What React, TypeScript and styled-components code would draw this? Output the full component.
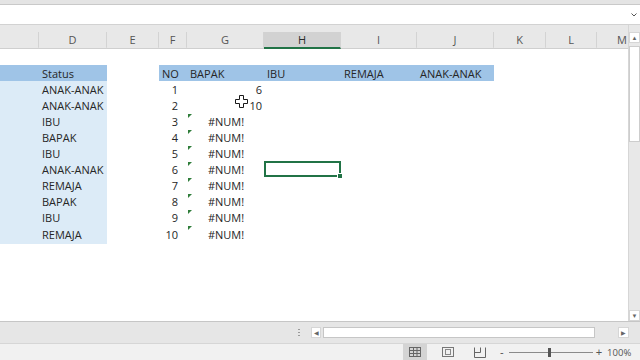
import React from 'react';
import styled, { createGlobalStyle } from 'styled-components';

const GlobalStyle = createGlobalStyle`
  html, body {
    margin: 0;
    padding: 0;
    background: #ffffff;
  }
  body {
    font-family: "Open Sans", "Liberation Sans", sans-serif;
    overflow: hidden;
  }
`;

const COLS = [39, 68, 52, 28, 77, 77, 76, 77, 52, 51, 32];
const TEMPLATE = COLS.map((w) => `${w}px`).join(' ');
const SHEET_GREEN = '#217346';

const Frame = styled.div`
  width: 640px;
  height: 360px;
  display: flex;
  flex-direction: column;
  background: #ffffff;
  overflow: hidden;
`;

const TopStrip = styled.div`
  height: 4px;
  background: #e4e4e4;
  border-bottom: 1px solid #c9c9c9;
`;

const FormulaBar = styled.div`
  height: 19px;
  background: #ffffff;
  border-bottom: 1px solid #d2d2d2;
  display: flex;
  align-items: center;
  justify-content: flex-end;
  padding-right: 3px;
`;

const Main = styled.div`
  height: 296px;
  display: flex;
`;

const SheetPane = styled.div`
  width: 629px;
  display: flex;
  flex-direction: column;
  border-right: 1px solid #d6d6d6;
  box-sizing: border-box;
`;

const HeaderBand = styled.div`
  height: 24px;
  box-sizing: border-box;
  padding-top: 7px;
  background: #e8e8e8;
  border-bottom: 1px solid #cfcfcf;
  display: grid;
  grid-template-columns: ${TEMPLATE};
`;

const ColHead = styled.div<{ $active?: boolean }>`
  display: flex;
  align-items: center;
  justify-content: center;
  font-size: 11px;
  color: ${(p) => (p.$active ? '#2a2a2a' : '#555555')};
  background: ${(p) => (p.$active ? '#d2d2d2' : 'transparent')};
  border-right: 1px solid #d3d3d3;
  border-bottom: 2px solid ${(p) => (p.$active ? SHEET_GREEN : 'transparent')};
  box-sizing: border-box;
  &:last-child {
    border-right: none;
    justify-content: flex-end;
    padding-right: 2px;
  }
`;

const Cells = styled.div`
  flex: 1;
  background: #ffffff;
`;

const Row = styled.div`
  display: grid;
  grid-template-columns: ${TEMPLATE};
  height: 16px;
`;

const LastRow = styled(Row)`
  height: 19px;
`;

type Fill = 'head' | 'band' | 'none';

const Cell = styled.div<{
  $fill?: Fill;
  $align?: 'left' | 'right' | 'center';
  $padR?: number;
  $flag?: boolean;
  $selected?: boolean;
}>`
  position: relative;
  display: flex;
  align-items: center;
  justify-content: ${(p) =>
    p.$align === 'right' ? 'flex-end' : p.$align === 'center' ? 'center' : 'flex-start'};
  padding: 0 ${(p) => p.$padR ?? 2}px 0 3px;
  font-size: 11px;
  color: #262626;
  white-space: nowrap;
  background: ${(p) =>
    p.$fill === 'head' ? '#9fc4e7' : p.$fill === 'band' ? '#dcebf7' : 'transparent'};
  box-sizing: border-box;
  ${(p) =>
    p.$flag &&
    `
    &::before {
      content: '';
      position: absolute;
      left: 1px;
      top: 1px;
      border-top: 4px solid #2f7d3a;
      border-right: 4px solid transparent;
    }
  `}
  ${(p) =>
    p.$selected &&
    `
    box-shadow: inset 0 0 0 2px ${SHEET_GREEN};
    &::after {
      content: '';
      position: absolute;
      right: -2px;
      bottom: -2px;
      width: 4px;
      height: 4px;
      background: ${SHEET_GREEN};
      border: 1px solid #ffffff;
    }
  `}
`;

const Cursor = styled.svg`
  position: absolute;
  left: 48px;
  top: -2px;
  width: 13px;
  height: 13px;
`;

const VScroll = styled.div`
  width: 11px;
  display: flex;
  flex-direction: column;
  padding-top: 7px;
  background: #e8e8e8;
`;

const ArrowBox = styled.div<{ $w?: number }>`
  width: ${(p) => p.$w ?? 11}px;
  height: 11px;
  box-sizing: border-box;
  display: flex;
  align-items: center;
  justify-content: center;
  background: #ffffff;
  border: 1px solid #d6d6d6;
  font-size: 6px;
  color: #666666;
`;

const VThumb = styled.div`
  margin-top: 3px;
  height: 96px;
  background: #ffffff;
  border: 1px solid #cdcdcd;
  box-sizing: border-box;
`;

const Spacer = styled.div`
  flex: 1;
`;

const HScrollBand = styled.div`
  height: 21px;
  border-top: 1px solid #c6c6c6;
  background: #e6e6e6;
  display: flex;
  align-items: center;
`;

const Splitter = styled.div`
  margin-left: 298px;
  width: 2px;
  height: 10px;
  background-image: radial-gradient(circle, #9a9a9a 0.8px, transparent 1px);
  background-size: 2px 3px;
`;

const HTrack = styled.div`
  margin-left: 11px;
  display: flex;
  align-items: center;
  width: 318px;
`;

const HThumb = styled.div`
  margin-left: 2px;
  width: 272px;
  height: 11px;
  background: #ffffff;
  border: 1px solid #c6c6c6;
  box-sizing: border-box;
`;

const StatusBar = styled.div`
  height: 17px;
  box-sizing: border-box;
  border-top: 1px solid #d6d6d6;
  background: #f1f1f1;
  display: flex;
  align-items: center;
`;

const ViewBtn = styled.div<{ $active?: boolean; $ml: number }>`
  margin-left: ${(p) => p.$ml}px;
  width: 24px;
  height: 16px;
  display: flex;
  align-items: center;
  justify-content: center;
  background: ${(p) => (p.$active ? '#d4d4d4' : 'transparent')};
`;

const ZoomSign = styled.span<{ $ml: number }>`
  margin-left: ${(p) => p.$ml}px;
  font-size: 11px;
  line-height: 11px;
  color: #555555;
  font-family: "Liberation Sans", sans-serif;
`;

const Slider = styled.div`
  position: relative;
  margin-left: 5px;
  width: 84px;
  height: 1px;
  background: #8a8a8a;
`;

const SliderKnob = styled.div`
  position: absolute;
  left: 39px;
  top: -4px;
  width: 3px;
  height: 9px;
  background: #555555;
`;

const ZoomText = styled.span`
  margin-left: 5px;
  font-size: 9.5px;
  color: #555555;
`;

type DataRow = { status: string; no: number; g: string; err?: boolean };

const DATA: DataRow[] = [
  { status: 'ANAK-ANAK', no: 1, g: '6' },
  { status: 'ANAK-ANAK', no: 2, g: '10' },
  { status: 'IBU', no: 3, g: '#NUM!', err: true },
  { status: 'BAPAK', no: 4, g: '#NUM!', err: true },
  { status: 'IBU', no: 5, g: '#NUM!', err: true },
  { status: 'ANAK-ANAK', no: 6, g: '#NUM!', err: true },
  { status: 'REMAJA', no: 7, g: '#NUM!', err: true },
  { status: 'BAPAK', no: 8, g: '#NUM!', err: true },
  { status: 'IBU', no: 9, g: '#NUM!', err: true },
  { status: 'REMAJA', no: 10, g: '#NUM!', err: true },
];

const LETTERS = ['', 'D', 'E', 'F', 'G', 'H', 'I', 'J', 'K', 'L', 'M'];

const PlusCursor = () => (
  <Cursor viewBox="0 0 13 13">
    <path
      d="M4.5 0.5 H8.5 V4.5 H12.5 V8.5 H8.5 V12.5 H4.5 V8.5 H0.5 V4.5 H4.5 Z"
      fill="#ffffff"
      stroke="#1a1a1a"
      strokeWidth="1"
    />
  </Cursor>
);

const NormalIcon = () => (
  <svg width="12" height="10" viewBox="0 0 12 10">
    <rect x="0.5" y="0.5" width="11" height="9" fill="none" stroke="#666" />
    <path d="M4.5 0.5 V9.5 M8 0.5 V9.5 M0.5 3.5 H11.5 M0.5 6.5 H11.5" stroke="#666" />
  </svg>
);

const PageIcon = () => (
  <svg width="12" height="10" viewBox="0 0 12 10">
    <rect x="0.5" y="0.5" width="11" height="9" fill="none" stroke="#777" />
    <rect x="3.5" y="2.5" width="5" height="5" fill="none" stroke="#888" />
  </svg>
);

const BreakIcon = () => (
  <svg width="12" height="11" viewBox="0 0 12 11">
    <path d="M0.5 0.5 V10.5 H11.5 V0.5 M0.5 5.5 H6.5 V0.5" fill="none" stroke="#666" />
  </svg>
);

const App: React.FC = () => {
  return (
    <Frame>
      <GlobalStyle />
      <TopStrip />
      <FormulaBar>
        <svg width="6" height="4" viewBox="0 0 6 4">
          <path d="M0.5 0.5 L3 3 L5.5 0.5" fill="none" stroke="#555" />
        </svg>
      </FormulaBar>

      <Main>
        <SheetPane>
          <HeaderBand>
            {LETTERS.map((l, i) => (
              <ColHead key={i} $active={l === 'H'}>
                {l}
              </ColHead>
            ))}
          </HeaderBand>

          <Cells>
            <Row />
            {/* header row of both tables */}
            <Row>
              <Cell $fill="head" />
              <Cell $fill="head">Status</Cell>
              <Cell />
              <Cell $fill="head">NO</Cell>
              <Cell $fill="head">BAPAK</Cell>
              <Cell $fill="head">IBU</Cell>
              <Cell $fill="head">REMAJA</Cell>
              <Cell $fill="head">ANAK-ANAK</Cell>
            </Row>
            {DATA.map((r, i) => {
              const RowEl = i === DATA.length - 1 ? LastRow : Row;
              return (
                <RowEl key={r.no}>
                  <Cell $fill="band" />
                  <Cell $fill="band">{r.status}</Cell>
                  <Cell />
                  <Cell $align="right" $padR={9}>
                    {r.no}
                  </Cell>
                  <Cell $align={r.err ? 'center' : 'right'} $flag={r.err}>
                    {r.no === 2 && <PlusCursor />}
                    {r.g}
                  </Cell>
                  <Cell $selected={i === 5} />
                </RowEl>
              );
            })}
          </Cells>
        </SheetPane>

        <VScroll>
          <ArrowBox>▲</ArrowBox>
          <VThumb />
          <Spacer />
          <ArrowBox>▼</ArrowBox>
        </VScroll>
      </Main>

      <HScrollBand>
        <Splitter />
        <HTrack>
          <ArrowBox $w={10}>◀</ArrowBox>
          <HThumb />
          <Spacer />
          <ArrowBox $w={11}>▶</ArrowBox>
        </HTrack>
      </HScrollBand>

      <StatusBar>
        <ViewBtn $active $ml={403}>
          <NormalIcon />
        </ViewBtn>
        <ViewBtn $ml={9}>
          <PageIcon />
        </ViewBtn>
        <ViewBtn $ml={8}>
          <BreakIcon />
        </ViewBtn>
        <ZoomSign $ml={8}>-</ZoomSign>
        <Slider>
          <SliderKnob />
        </Slider>
        <ZoomSign $ml={3}>+</ZoomSign>
        <ZoomText>100%</ZoomText>
      </StatusBar>
    </Frame>
  );
};

export default App;
